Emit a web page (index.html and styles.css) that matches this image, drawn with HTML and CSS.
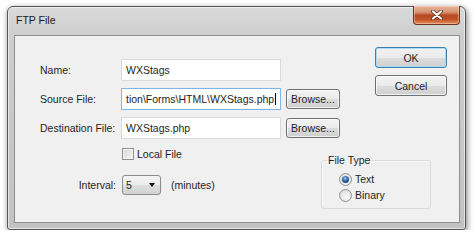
FILE: index.html
```html
<!DOCTYPE html>
<html lang="en">

<head>
  <meta charset="UTF-8">
  <title>FTP File</title>
  <link rel="stylesheet" href="styles.css">
</head>

<body>
  <div class="window">
    <div class="titlebar">
      <span class="title">FTP File</span>
      <button class="close" type="button" aria-label="Close">
        <svg width="12" height="10" viewBox="0 0 12 10">
          <path d="M2 1.5 L10 8.5 M10 1.5 L2 8.5" stroke="#5a2a18" stroke-width="3.6" stroke-linecap="round" />
          <path d="M2 1.5 L10 8.5 M10 1.5 L2 8.5" stroke="#ffffff" stroke-width="2.2" stroke-linecap="round" />
        </svg>
      </button>
    </div>
    <div class="client">
      <div class="top">
        <div class="fields">
          <label>Name:</label>
          <div class="field">WXStags</div>
          <span></span>
          <label>Source File:</label>
          <div class="field focused"><span class="caret">tion\Forms\HTML\WXStags.php</span></div>
          <button class="btn" type="button">Browse...</button>
          <label>Destination File:</label>
          <div class="field">WXStags.php</div>
          <button class="btn" type="button">Browse...</button>
        </div>
        <div class="actions">
          <button class="btn default" type="button">OK</button>
          <button class="btn" type="button">Cancel</button>
        </div>
      </div>
      <div class="lower">
        <div class="options">
          <div class="check-row"><span class="checkbox"></span>Local File</div>
          <div class="interval-row">
            <span class="interval-label">Interval:</span>
            <div class="select"><span>5</span><i class="arrow"></i></div>
            <span class="unit">(minutes)</span>
          </div>
        </div>
        <fieldset class="filetype">
          <legend>File Type</legend>
          <div class="radio-row"><span class="radio checked"></span>Text</div>
          <div class="radio-row"><span class="radio"></span>Binary</div>
        </fieldset>
      </div>
    </div>
  </div>
</body>

</html>
```
FILE: styles.css
```css
/* Windows 7 basic dialog: frame grey, client #F0F0F0, focus blue #3C7FB1 */
body {
  margin: 0;
  background-color: #fff;
  font-family: "Liberation Sans", Arial, sans-serif;
  font-size: 10.5px;
  color: #1e1e1e;
}

.window {
  box-sizing: border-box;
  margin: 6px 0 0 7px;
  width: 459px;
  height: 224px;
  border: 1px solid #555;
  border-radius: 6px 6px 3px 3px;
  background: linear-gradient(to bottom, #dadada 0, #cecece 28px, #c2c2c2 100%);
  box-shadow: 1px 2px 6px rgba(0, 0, 0, 0.5), inset 0 0 0 1px rgba(255, 255, 255, 0.55);
  padding: 0 5px 6px 6px;
  display: flex;
  flex-direction: column;
}

.titlebar {
  height: 28px;
  display: flex;
  align-items: flex-start;
  margin-left: -6px;
  margin-right: -5px;
}

.title {
  padding: 7px 0 0 8px;
  line-height: 12px;
  color: #1a1a1a;
}

.close {
  margin: -1px 5px 0 auto;
  width: 47px;
  height: 19px;
  padding: 0;
  border: 1px solid #6e3420;
  border-top: none;
  border-radius: 0 0 4px 4px;
  background: linear-gradient(to bottom, #e9b79e 0%, #d7906f 35%, #b74a24 52%, #c15427 75%, #e6905f 100%);
  box-shadow: inset 0 0 0 1px rgba(255, 220, 200, 0.45);
  display: flex;
  align-items: center;
  justify-content: center;
}

.client {
  flex: 1;
  border: 1px solid #8f8f8f;
  background-color: #f0f0f0;
  padding: 11px 12px 0 25px;
}

.top {
  display: flex;
  justify-content: space-between;
}

.fields {
  margin-top: 12px;
  display: grid;
  grid-template-columns: 76px 160px 54px;
  grid-auto-rows: 22px;
  gap: 7px 5px;
  align-items: center;
}

.field {
  box-sizing: border-box;
  height: 22px;
  border: 1px solid #dadada;
  background-color: #fff;
  padding: 0 4px;
  line-height: 20px;
  white-space: nowrap;
  overflow: hidden;
}

.field.focused {
  border-color: #7eb4ea;
}

.caret {
  border-right: 1px solid #000;
  padding-right: 1px;
}

.btn {
  box-sizing: border-box;
  height: 20px;
  padding: 0;
  border: 1px solid #707070;
  border-radius: 3px;
  background: linear-gradient(to bottom, #f2f2f2 0%, #ebebeb 50%, #dddddd 51%, #cfcfcf 100%);
  box-shadow: inset 0 0 0 1px rgba(255, 255, 255, 0.7);
  font: inherit;
  color: #1e1e1e;
}

.actions {
  display: flex;
  flex-direction: column;
  gap: 7px;
}

.actions .btn {
  width: 72px;
  height: 21px;
}

.btn.default {
  border-color: #3c7fb1;
  box-shadow: inset 0 0 0 1px #a9daf6;
}

.lower {
  margin-top: 9px;
  display: flex;
  align-items: flex-start;
}

.check-row {
  margin-left: 82px;
  height: 12px;
  display: flex;
  align-items: center;
  gap: 3px;
}

.checkbox {
  box-sizing: border-box;
  width: 12px;
  height: 12px;
  border: 1px solid #8e8f8f;
  background: linear-gradient(135deg, #d6d6d6, #f6f6f6);
  box-shadow: inset 0 0 0 1px #f4f4f4;
}

.interval-row {
  margin-top: 15px;
  height: 20px;
  display: flex;
  align-items: center;
}

.interval-label {
  width: 76px;
  text-align: right;
  margin-right: 6px;
}

.select {
  box-sizing: border-box;
  width: 39px;
  height: 20px;
  border: 1px solid #8b8b8b;
  border-radius: 3px;
  background: linear-gradient(to bottom, #f4f4f4 0%, #ececec 50%, #dedede 51%, #d2d2d2 100%);
  padding: 0 5px 0 3px;
  display: flex;
  align-items: center;
  justify-content: space-between;
}

.arrow {
  border-top: 4px solid #111;
  border-left: 3.5px solid transparent;
  border-right: 3.5px solid transparent;
}

.unit {
  margin-left: 10px;
}

.filetype {
  box-sizing: border-box;
  width: 110px;
  margin: 6px 16px 0 auto;
  padding: 5px 0 5px 5px;
  border: 1px solid #d9d9d9;
  border-radius: 3px;
  box-shadow: inset 1px 1px 0 #fafafa;
  min-width: 0;
}

.filetype legend {
  padding: 0 1px;
  line-height: 12px;
}

.radio-row {
  height: 16px;
  padding-left: 12px;
  display: flex;
  align-items: center;
  gap: 3px;
}

.radio {
  box-sizing: border-box;
  width: 13px;
  height: 13px;
  border: 1px solid #8e8f8f;
  border-radius: 50%;
  background: radial-gradient(circle at 60% 65%, #f8f8f8 0, #d8d8d8 100%);
  display: flex;
  align-items: center;
  justify-content: center;
}

.radio.checked::after {
  content: "";
  width: 7px;
  height: 7px;
  border-radius: 50%;
  background: radial-gradient(circle at 45% 35%, #9fd0f2 0, #2b64a8 45%, #12305e 100%);
}
```
